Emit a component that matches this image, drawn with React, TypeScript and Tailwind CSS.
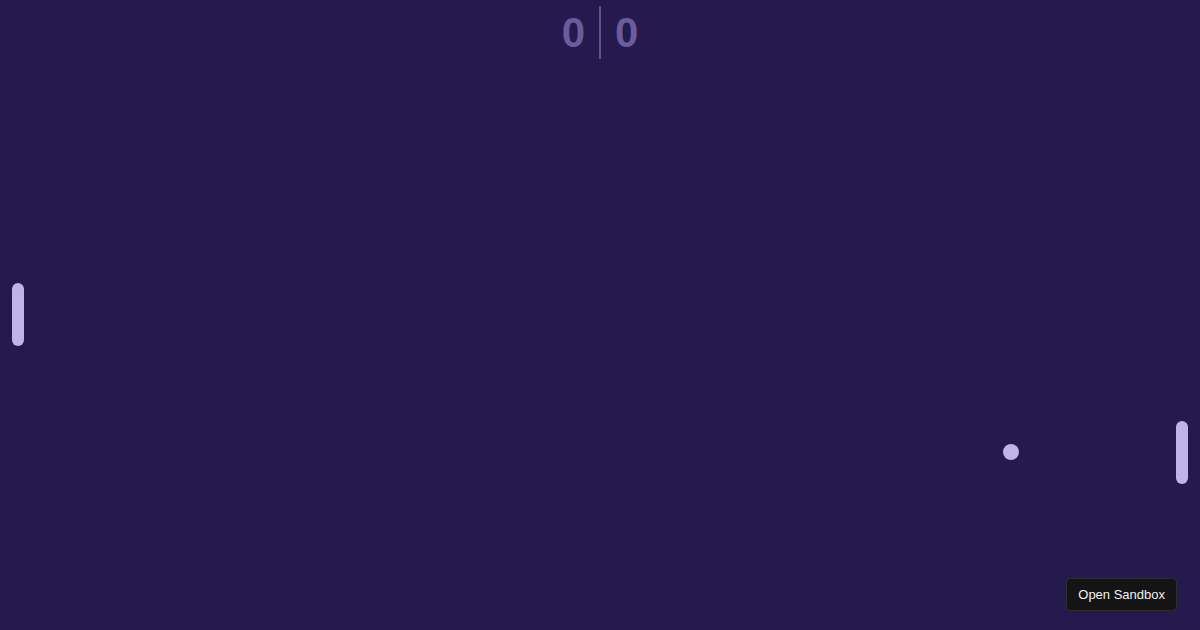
import React from 'react';

export default function App() {
  return (
    <div
      className="relative w-[1200px] h-[630px] overflow-hidden bg-[#251a4d]"
      style={{ fontFamily: '"Liberation Sans", Arial, sans-serif' }}
    >
      {/* score */}
      <div className="flex justify-center pt-[6px]">
        <div className="flex items-center gap-[14px] text-[42px] leading-none font-bold text-[#6a5c9d]">
          <span>0</span>
          <div className="w-[2px] h-[53px] bg-[#5e5190]"></div>
          <span>0</span>
        </div>
      </div>

      {/* paddles + ball on the court */}
      <div className="absolute left-[12px] top-[283px] w-[12px] h-[63px] rounded-full bg-[#c0b4e6]"></div>
      <div className="absolute left-[1176px] top-[421px] w-[12px] h-[63px] rounded-full bg-[#c0b4e6]"></div>
      <div className="absolute left-[1003px] top-[444px] w-[16px] h-[16px] rounded-full bg-[#c0b4e6]"></div>

      <button className="absolute right-[23px] bottom-[19px] h-[33px] px-[11px] rounded-[4px] border border-[#2e2e2e] bg-[#141414] text-[13px] text-[#f0f0f0]">
        Open Sandbox
      </button>
    </div>
  );
}
